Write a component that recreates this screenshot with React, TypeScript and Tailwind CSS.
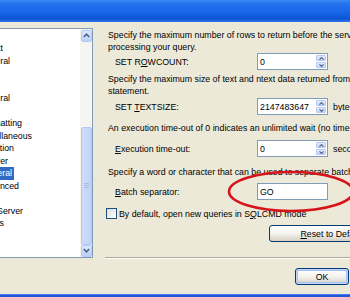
import React from 'react';

const tree: { label: string; end: number; selected?: boolean }[] = [
  { label: 'Tabs', end: 0 },
  { label: 'Plain Text', end: 3 },
  { label: 'General', end: 10 },
  { label: 'Tabs', end: 0 },
  { label: 'XML', end: 0 },
  { label: 'General', end: 10 },
  { label: 'Tabs', end: 0 },
  { label: 'Formatting', end: 22 },
  { label: 'Miscellaneous', end: 32 },
  { label: 'Query Execution', end: 14 },
  { label: 'SQL Server', end: 8 },
  { label: 'General', end: 14, selected: true },
  { label: 'Advanced', end: 19 },
  { label: 'ANSI', end: 0 },
  { label: 'Analysis Server', end: 23 },
  { label: 'Query Results', end: 4 },
];

function Chevron({ down }: { down?: boolean }) {
  return (
    <svg width="7" height="5" viewBox="0 0 7 5">
      <path
        d={down ? 'M0.8 1 L3.5 3.8 L6.2 1' : 'M0.8 4 L3.5 1.2 L6.2 4'}
        fill="none"
        stroke="#4d6185"
        strokeWidth="1.5"
      />
    </svg>
  );
}

function Spin() {
  return (
    <div className="ml-auto flex flex-col w-[10px] h-[13px] gap-[1px]">
      <div className="flex-1 flex items-center justify-center rounded-[1px] border border-[#b7caf3] bg-gradient-to-b from-[#e6eefd] to-[#c3d4f8]">
        <svg width="5" height="3" viewBox="0 0 5 3"><path d="M0.5 2.6 L2.5 0.6 L4.5 2.6" fill="none" stroke="#4d6185" strokeWidth="1.1" /></svg>
      </div>
      <div className="flex-1 flex items-center justify-center rounded-[1px] border border-[#b7caf3] bg-gradient-to-b from-[#e6eefd] to-[#c3d4f8]">
        <svg width="5" height="3" viewBox="0 0 5 3"><path d="M0.5 0.4 L2.5 2.4 L4.5 0.4" fill="none" stroke="#4d6185" strokeWidth="1.1" /></svg>
      </div>
    </div>
  );
}

function Field({ value, spin }: { value: string; spin?: boolean }) {
  return (
    <div className="w-[71px] h-[17px] shrink-0 bg-white border border-[#7f9db9] flex items-center pl-[2px] pr-[1px]">
      <span>{value}</span>
      {spin && <Spin />}
    </div>
  );
}

function Row({ label, value, spin, unit }: { label: React.ReactNode; value: string; spin?: boolean; unit?: string }) {
  return (
    <div className="flex items-center h-[17px]">
      <div className="w-[149px] shrink-0 pl-[7px]">{label}</div>
      <Field value={value} spin={spin} />
      {unit && <span className="ml-[5px]">{unit}</span>}
    </div>
  );
}

function XpButton({ children, className }: { children: React.ReactNode; className: string }) {
  return (
    <div
      className={`h-[17px] shrink-0 rounded-[3px] border border-[#003c74] bg-gradient-to-b from-[#ffffff] via-[#f4f3ee] to-[#d6d0c5] flex items-center justify-center ${className}`}
    >
      {children}
    </div>
  );
}

export default function App() {
  return (
    <div className="relative w-[350px] h-[297px] overflow-hidden bg-[#ece9d8] text-black text-[8.8px] leading-[12px] font-['Liberation_Sans',Arial,sans-serif] flex flex-col">
      {/* title bar */}
      <div className="h-[22px] shrink-0 bg-[linear-gradient(to_bottom,#3d89f4_0%,#2472ec_18%,#1966e8_55%,#0c54d6_85%,#2f78e8_100%)]" />

      <div className="flex-1 flex min-h-0">
        {/* options tree */}
        <div className="mt-[6px] w-[93px] h-[230px] shrink-0 bg-white border border-[#7f9db9] border-l-0 flex">
          <div className="flex-1 min-w-0 pt-[0.3px]">
            {tree.map((t, i) => (
              <div key={i} className="h-[12.5px] flex items-center">
                <div className="flex justify-end overflow-hidden whitespace-nowrap" style={{ width: t.end }}>
                  <span className={t.selected ? 'bg-[#316ac5] text-white pr-[2px] leading-[13px]' : ''}>{t.label}</span>
                </div>
              </div>
            ))}
          </div>
          {/* scrollbar */}
          <div className="w-[12px] shrink-0 flex flex-col bg-[#f6f5f1] p-[0.5px]">
            <div className="h-[12px] rounded-[2px] border border-[#b4c8f6] bg-gradient-to-b from-[#dfe8fd] to-[#bccff7] flex items-center justify-center">
              <Chevron />
            </div>
            <div className="h-[85px]" />
            <div className="flex-1 rounded-[2px] border border-[#b4c8f6] bg-gradient-to-r from-[#cfdcfa] to-[#c2d3f8] flex items-center justify-center">
              <div className="flex flex-col gap-[1px]">
                <div className="w-[5px] h-[1px] bg-[#a9bdeb]" />
                <div className="w-[5px] h-[1px] bg-[#a9bdeb]" />
                <div className="w-[5px] h-[1px] bg-[#a9bdeb]" />
              </div>
            </div>
            <div className="h-[12px] rounded-[2px] border border-[#b4c8f6] bg-gradient-to-b from-[#dfe8fd] to-[#bccff7] flex items-center justify-center">
              <Chevron down />
            </div>
          </div>
        </div>

        {/* page */}
        <div className="ml-[15px] pt-[7px] flex flex-col whitespace-nowrap">
          <div>
            Specify the maximum number of rows to return before the server stops
            <br />
            processing your query.
          </div>
          <Row label={<>SET R<u>O</u>WCOUNT:</>} value="0" spin />

          <div className="mt-[3px]">
            Specify the maximum size of text and ntext data returned from a SELECT
            <br />
            statement.
          </div>
          <div className="mt-[1px]">
            <Row label={<>SET <u>T</u>EXTSIZE:</>} value="2147483647" spin unit="bytes" />
          </div>

          <div className="mt-[7px]">
            An execution time-out of 0 indicates an unlimited wait (no time-out).
          </div>
          <div className="mt-[6px]">
            <Row label={<><u>E</u>xecution time-out:</>} value="0" spin unit="seconds" />
          </div>

          <div className="mt-[9px]">
            Specify a word or character that can be used to separate batches.
          </div>
          <div className="mt-[5px]">
            <Row label={<><u>B</u>atch separator:</>} value="GO" />
          </div>

          <div className="mt-[8px] h-[11px] flex items-center -ml-[2px]">
            <div className="w-[11px] h-[11px] bg-gradient-to-br from-[#dcdcd7] to-[#ffffff] border border-[#1c5180]" />
            <span className="ml-[2px]">By default, open new queries in S<u>Q</u>LCMD mode</span>
          </div>

          <div className="mt-[6px] flex">
            <XpButton className="ml-[161px] w-[126px]">
              <span><u>R</u>eset to Default</span>
            </XpButton>
          </div>

          <div className="mt-[15px] -ml-[3px] w-[260px] border-t border-[#aca899] border-b border-b-white" />

          <div className="mt-[9px] flex">
            <XpButton className="ml-[187px] w-[54px] shadow-[inset_0_0_0_1px_#c4d6f7,inset_0_0_0_2px_#a7c0f0]">
              <span>OK</span>
            </XpButton>
          </div>
        </div>
      </div>

      {/* taskbar edge */}
      <div className="h-[3px] shrink-0 bg-[#2456d8] border-t border-[#3f7cf2]" />

      {/* red highlight ellipse */}
      <svg className="absolute left-0 top-0 pointer-events-none" width="350" height="297">
        <ellipse cx="291" cy="191.5" rx="62" ry="19.5" fill="none" stroke="#d8141b" strokeWidth="2.6" />
      </svg>
    </div>
  );
}
